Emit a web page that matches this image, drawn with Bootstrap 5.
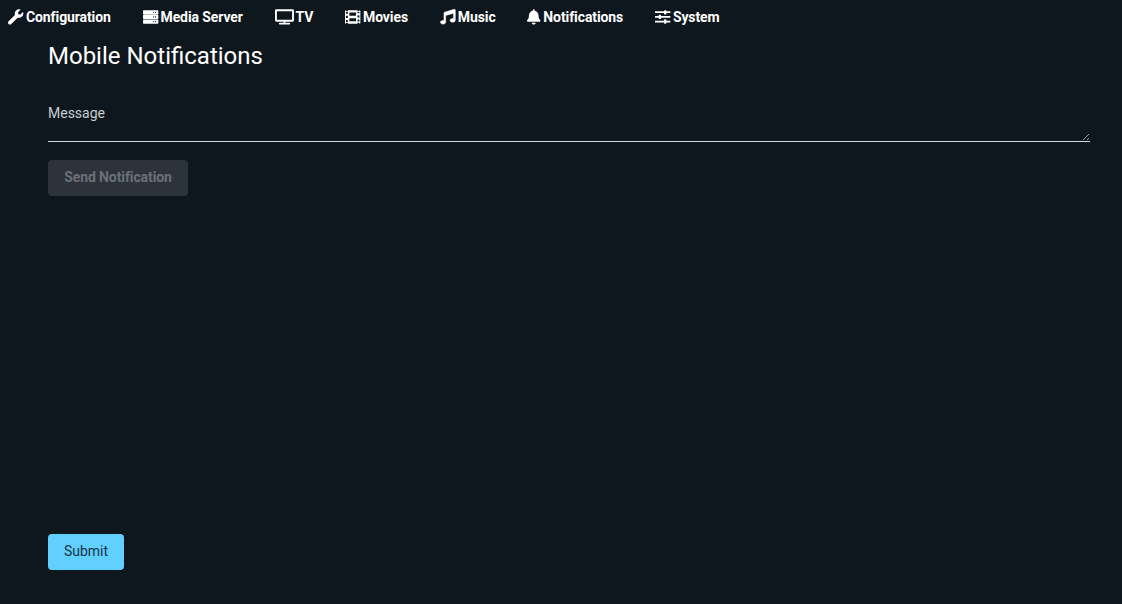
<!DOCTYPE html>
<html lang="en">
<head>
<meta charset="utf-8">
<title>Mobile Notifications</title>
<link href="https://cdn.jsdelivr.net/npm/bootstrap@5.3.0/dist/css/bootstrap.min.css" rel="stylesheet">
<style>
html,body{height:604px;overflow:hidden}
body{background:#0f171e;color:#fff;font-family:Roboto,"Liberation Sans",sans-serif;font-size:14px}
.top-menu{height:34px;padding-left:8px;gap:31.75px}
.top-link{color:#fff;text-decoration:none;font-weight:700;font-size:14px;line-height:34px;letter-spacing:-.1px}
.top-link svg{fill:#fff;height:16px;margin-right:2px;vertical-align:-3px}
.page-body{padding:0 32px 0 48px}
.page-title{font-size:24px;font-weight:400;line-height:28px;margin:8px 0 0;color:#fff}
.field-label{display:block;color:#c9ccd0;font-size:14px;line-height:16px;margin:35px 0 0}
textarea.field-input,textarea.field-input:focus{background:transparent;border:0;border-bottom:1px solid #d5d7da;border-radius:0;color:#fff;padding:0;height:21px;min-height:0;box-shadow:none;display:block;width:100%}
.send-btn,.send-btn:disabled{background:#2d333b;border:0;color:#6b7077;font-weight:700;font-size:14px;letter-spacing:-.1px;width:140px;height:36px;padding:0 0 2px;border-radius:4px;opacity:1;margin-top:18px}
.submit-btn,.submit-btn:hover{background:#62d0ff;border:0;color:#173243;font-size:14px;font-weight:400;width:76px;height:36px;padding:0 0 2px;border-radius:4px;margin-top:338px}
</style>
</head>
<body>
<nav class="d-flex align-items-center top-menu">
<a class="top-link" href="#"><svg viewBox="0 -8 533 533"><path d="M507.73 109.1c-2.24-9.03-13.54-12.09-20.12-5.51l-74.36 74.36-67.88-11.31-11.31-67.88 74.36-74.36c6.62-6.62 3.43-17.9-5.66-20.16-47.38-11.74-99.55.91-136.58 37.93-39.64 39.64-50.55 97.1-34.05 147.2L18.74 402.76c-24.99 24.99-24.99 65.51 0 90.5 24.99 24.99 65.51 24.99 90.5 0l213.21-213.21c50.12 16.71 107.47 5.68 147.37-34.22 37.07-37.07 49.7-89.32 37.91-136.73z"/></svg>Configuration</a>
<a class="top-link" href="#"><svg viewBox="0 -40 533 533"><path fill-rule="evenodd" d="M24 0h464a24 24 0 0 1 24 24v92a24 24 0 0 1-24 24H24a24 24 0 0 1-24-24V24A24 24 0 0 1 24 0zm396 50a20 20 0 1 0 0 40 20 20 0 0 0 0-40zm-64 0a20 20 0 1 0 0 40 20 20 0 0 0 0-40zM24 154h464a24 24 0 0 1 24 24v92a24 24 0 0 1-24 24H24a24 24 0 0 1-24-24v-92a24 24 0 0 1 24-24zm396 50a20 20 0 1 0 0 40 20 20 0 0 0 0-40zm-64 0a20 20 0 1 0 0 40 20 20 0 0 0 0-40zM24 308h464a24 24 0 0 1 24 24v92a24 24 0 0 1-24 24H24a24 24 0 0 1-24-24v-92a24 24 0 0 1 24-24zm396 50a20 20 0 1 0 0 40 20 20 0 0 0 0-40zm-64 0a20 20 0 1 0 0 40 20 20 0 0 0 0-40z"/></svg>Media Server</a>
<a class="top-link" href="#"><svg viewBox="0 -12 640 539"><path d="M592 0H48A48 48 0 0 0 0 48v320a48 48 0 0 0 48 48h245v32H160a32 32 0 0 0 0 64h320a32 32 0 0 0 0-64H347v-32h245a48 48 0 0 0 48-48V48a48 48 0 0 0-48-48zm-16 352H64V64h512z"/></svg>TV</a>
<a class="top-link" href="#"><svg viewBox="0 -40 533 533"><path fill-rule="evenodd" d="M488 0h-8v20a12 12 0 0 1-12 12h-40a12 12 0 0 1-12-12V0H96v20a12 12 0 0 1-12 12H44a12 12 0 0 1-12-12V0h-8A24 24 0 0 0 0 24v400a24 24 0 0 0 24 24h8v-20a12 12 0 0 1 12-12h40a12 12 0 0 1 12 12v20h320v-20a12 12 0 0 1 12-12h40a12 12 0 0 1 12 12v20h8a24 24 0 0 0 24-24V24a24 24 0 0 0-24-24zM96 380a12 12 0 0 1-12 12H44a12 12 0 0 1-12-12v-40a12 12 0 0 1 12-12h40a12 12 0 0 1 12 12zm0-132a12 12 0 0 1-12 12H44a12 12 0 0 1-12-12v-48a12 12 0 0 1 12-12h40a12 12 0 0 1 12 12zm0-140a12 12 0 0 1-12 12H44a12 12 0 0 1-12-12V68a12 12 0 0 1 12-12h40a12 12 0 0 1 12 12zm272 260H144V264h224zm0-184H144V80h224zm112 180a12 12 0 0 1-12 12h-40a12 12 0 0 1-12-12v-40a12 12 0 0 1 12-12h40a12 12 0 0 1 12 12zm0-132a12 12 0 0 1-12 12h-40a12 12 0 0 1-12-12v-48a12 12 0 0 1 12-12h40a12 12 0 0 1 12 12zm0-140a12 12 0 0 1-12 12h-40a12 12 0 0 1-12-12V68a12 12 0 0 1 12-12h40a12 12 0 0 1 12 12z"/></svg>Movies</a>
<a class="top-link" href="#"><svg viewBox="-6 0 533 533"><path stroke="#fff" stroke-width="20" d="M470.38 11.51L150.41 106A32 32 0 0 0 128 136.51v251.41A139 139 0 0 0 96 384c-53 0-86 28.66-86 59s33 59 86 59 86-28.66 86-59V214.32l266-75v184.61a138.4 138.4 0 0 0-32-3.93c-53 0-86 28.66-86 59s33 59 86 59 86-28.65 86-59V42a32 32 0 0 0-41.62-30.49z"/></svg>Music</a>
<a class="top-link" href="#"><svg viewBox="0 -8 467 533"><path d="M224 512c35.32 0 63.97-28.65 63.97-64H160.03c0 35.35 28.65 64 63.97 64zm215.39-149.71c-19.32-20.76-55.47-51.99-55.47-154.29 0-77.7-54.48-139.9-127.94-155.16V32c0-17.67-14.32-32-31.98-32s-31.98 14.33-31.98 32v20.84C118.56 68.1 64.08 130.3 64.08 208c0 102.3-36.15 133.53-55.47 154.29-6 6.45-8.66 14.16-8.61 21.71.11 16.4 12.98 32 32.1 32h383.8c19.12 0 32-15.6 32.1-32 .05-7.55-2.61-15.27-8.61-21.71z"/></svg>Notifications</a>
<a class="top-link" href="#"><svg viewBox="0 -40 533 533"><path d="M0 36h300V24a24 24 0 0 1 24-24h32a24 24 0 0 1 24 24v12h132v60H380v24a24 24 0 0 1-24 24h-32a24 24 0 0 1-24-24V96H0zM0 194h120v-16a24 24 0 0 1 24-24h32a24 24 0 0 1 24 24v16h312v60H200v16a24 24 0 0 1-24 24h-32a24 24 0 0 1-24-24v-16H0zM0 352h300v-24a24 24 0 0 1 24-24h32a24 24 0 0 1 24 24v24h132v60H380v12a24 24 0 0 1-24 24h-32a24 24 0 0 1-24-24v-12H0z"/></svg>System</a>
</nav>
<main class="page-body">
<h1 class="page-title">Mobile Notifications</h1>
<form>
<label class="field-label" for="msg">Message</label>
<textarea id="msg" class="form-control field-input" rows="1"></textarea>
<button type="button" class="btn send-btn d-block" disabled>Send Notification</button>
<button type="button" class="btn submit-btn d-block">Submit</button>
</form>
</main>
<script src="https://cdn.jsdelivr.net/npm/bootstrap@5.3.0/dist/js/bootstrap.bundle.min.js"></script>
</body>
</html>
